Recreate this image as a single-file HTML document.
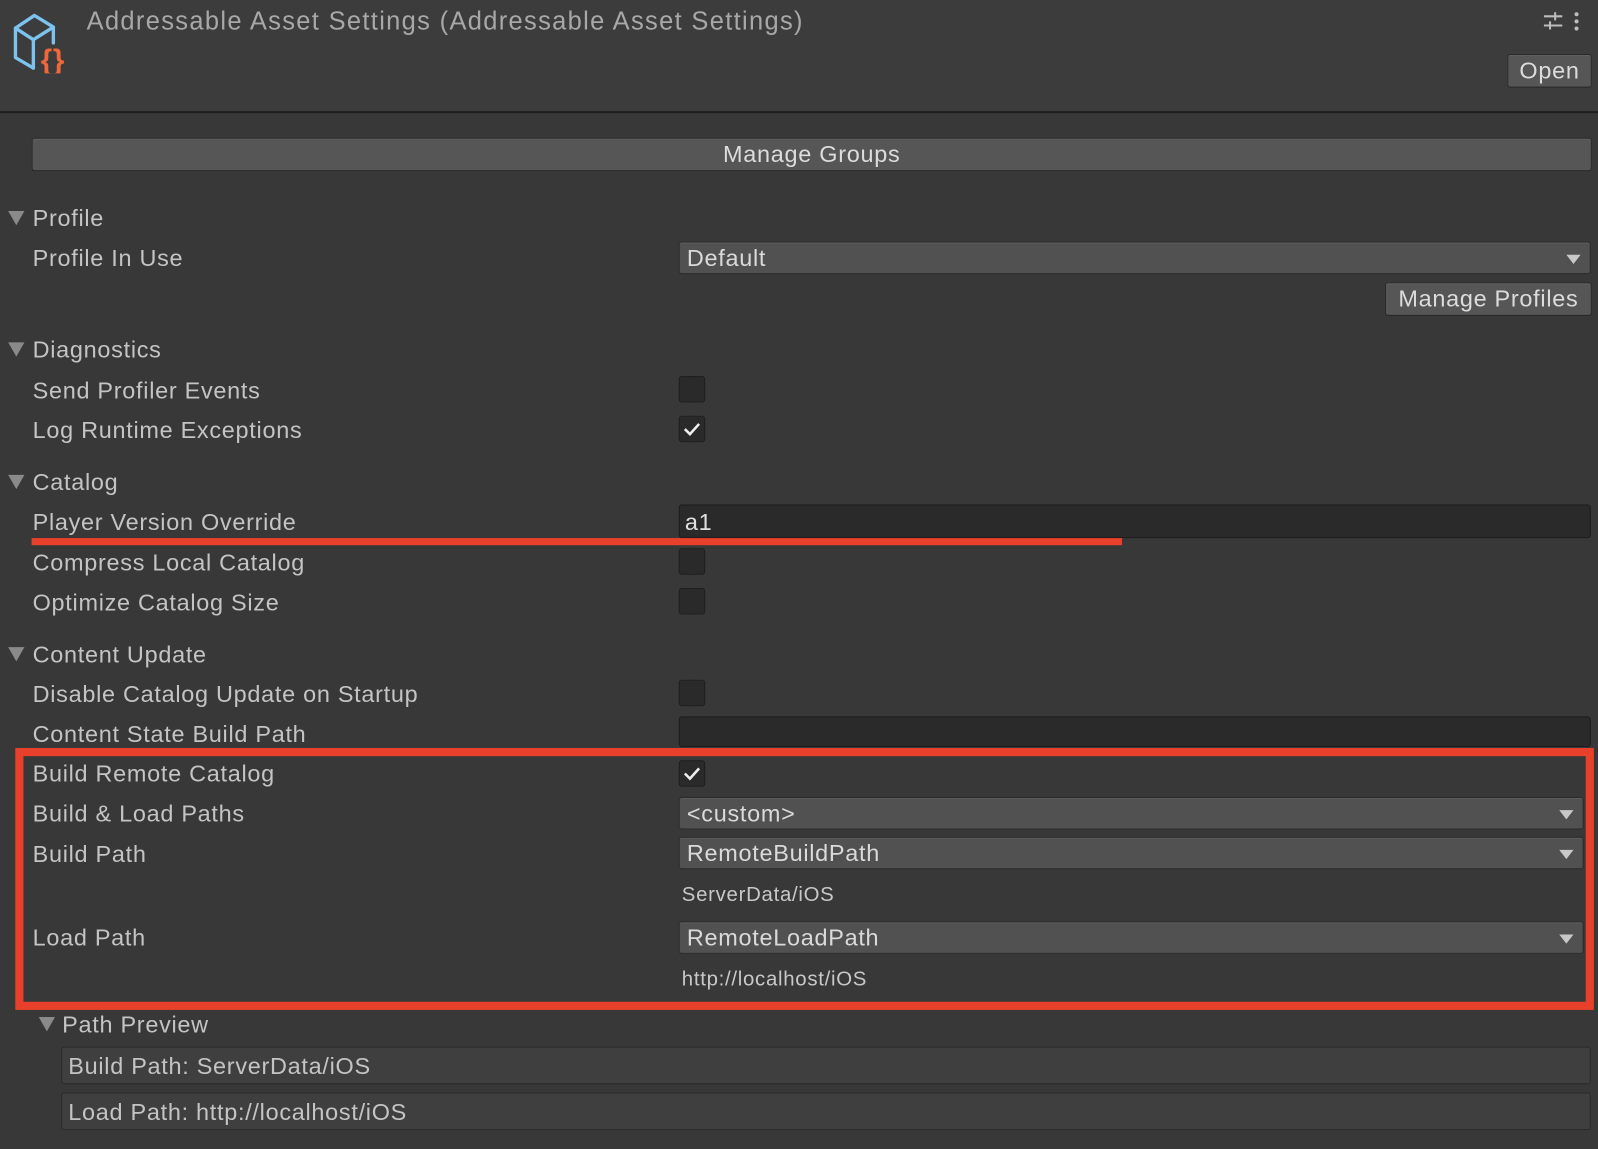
<!DOCTYPE html>
<html><head><meta charset="utf-8"><style>
html,body{margin:0;padding:0;background:#383838;width:1598px;height:1148px;overflow:hidden}
#w{position:absolute;left:0;top:0;width:1568px;height:1127px;transform:scale(1.0191);transform-origin:0 0;font-family:"Liberation Sans",sans-serif;color:#c4c4c4;font-size:23px;letter-spacing:0.7px}
.a{position:absolute;white-space:nowrap}
.l{position:absolute;left:32px;height:28px;line-height:28px;white-space:nowrap}
.tri{position:absolute;width:0;height:0;border-left:8px solid transparent;border-right:8px solid transparent;border-top:14px solid #8a8a8a}
.btn{position:absolute;background:#565656;border:1px solid #2a2a2a;border-bottom-color:#242424;border-radius:3px;color:#dcdcdc;text-align:center;box-sizing:border-box;box-shadow:inset 0 1px 0 #606060}
.dd{position:absolute;left:666px;right:7px;height:32px;background:#515151;border:1px solid #2c2c2c;border-radius:3px;box-sizing:border-box;line-height:30px;padding-left:7px;color:#dadada;box-shadow:inset 0 1px 0 #5c5c5c}
.dd:after{content:"";position:absolute;right:9px;top:12px;border-left:7px solid transparent;border-right:7px solid transparent;border-top:9px solid #c8c8c8}
.cb{position:absolute;left:666px;width:26px;height:26px;background:#2a2a2a;border:1px solid #1f1f1f;border-radius:3px;box-sizing:border-box}
.tf{position:absolute;left:666px;right:7px;height:33px;background:#2a2a2a;border:1px solid #1c1c1c;border-radius:3px;box-sizing:border-box;line-height:32px;padding-left:5px;color:#e0e0e0}
.pv{position:absolute;left:60px;right:7px;height:37px;background:#3f3f3f;border:1px solid #2a2a2a;border-radius:3px;box-sizing:border-box;line-height:36px;padding-left:6px}
</style></head><body><div id="w">
<div class="a" style="left:0;top:0;width:1568px;height:109px;background:#3c3c3c;border-bottom:2px solid #1f1f1f"></div>
<svg class="a" style="left:10px;top:10px" width="62" height="62" viewBox="0 0 60 60">
<path d="M5 17 L23 5 L41 16 L41 31 M5 17 L22 28 L41 16 M5 17 L5 45 L22 55 M22 28 L22 55" fill="none" stroke="#7cc4ef" stroke-width="3.2" stroke-linejoin="round" stroke-linecap="round"/>
<text x="29" y="57" fill="#f0683a" font-family="Liberation Sans" font-weight="bold" font-size="28">{}</text>
</svg>
<div class="a" style="left:85px;top:5px;line-height:32px;font-size:25px;color:#a8a8a8;letter-spacing:1.3px">Addressable Asset Settings (Addressable Asset Settings)</div>
<svg class="a" style="left:1513px;top:9px" width="40" height="24" viewBox="0 0 40 24">
<g stroke="#bdbdbd" stroke-width="2"><path d="M2 7 H20 M2 16 H20"/><path d="M13 3 V11 M8 12 V20"/></g>
<circle cx="34" cy="5" r="2" fill="#bdbdbd"/><circle cx="34" cy="12" r="2" fill="#bdbdbd"/><circle cx="34" cy="19" r="2" fill="#bdbdbd"/>
</svg>
<div class="btn" style="left:1479px;top:53px;width:83px;height:33px;line-height:31px;font-size:23px">Open</div>
<div class="btn" style="left:31px;top:135px;width:1531px;height:33px;line-height:31px">Manage Groups</div>

<div class="tri" style="left:8px;top:207px"></div><div class="l" style="top:200px">Profile</div>
<div class="l" style="top:239px">Profile In Use</div>
<div class="dd" style="top:237px">Default</div>
<div class="btn" style="left:1359px;top:277px;width:203px;height:33px;line-height:31px">Manage Profiles</div>

<div class="tri" style="left:8px;top:336px"></div><div class="l" style="top:329px">Diagnostics</div>
<div class="l" style="top:369px">Send Profiler Events</div><div class="cb" style="top:369px"></div>
<div class="l" style="top:408px">Log Runtime Exceptions</div><div class="cb" style="top:408px"><svg width="24" height="24"><path d="M5 12 L10 17 L19 7" fill="none" stroke="#eee" stroke-width="2.5"/></svg></div>

<div class="tri" style="left:8px;top:466px"></div><div class="l" style="top:459px">Catalog</div>
<div class="l" style="top:498px">Player Version Override</div>
<div class="tf" style="top:495px">a1</div>
<div class="a" style="left:31px;top:528px;width:1070px;height:7px;background:#e8402a"></div>
<div class="l" style="top:538px">Compress Local Catalog</div><div class="cb" style="top:538px"></div>
<div class="l" style="top:577px">Optimize Catalog Size</div><div class="cb" style="top:577px"></div>

<div class="tri" style="left:8px;top:635px"></div><div class="l" style="top:628px">Content Update</div>
<div class="l" style="top:667px">Disable Catalog Update on Startup</div><div class="cb" style="top:667px"></div>
<div class="l" style="top:706px">Content State Build Path</div>
<div class="tf" style="top:703px;height:30px"></div>

<div class="a" style="left:15px;top:734px;width:1549px;height:257px;border:8px solid #e8402a;box-sizing:border-box"></div>
<div class="l" style="top:745px">Build Remote Catalog</div><div class="cb" style="top:746px"><svg width="24" height="24"><path d="M5 12 L10 17 L19 7" fill="none" stroke="#eee" stroke-width="2.5"/></svg></div>
<div class="l" style="top:784px">Build &amp; Load Paths</div><div class="dd" style="top:782px;right:14px">&lt;custom&gt;</div>
<div class="l" style="top:824px">Build Path</div><div class="dd" style="top:821px;right:14px">RemoteBuildPath</div>
<div class="a" style="left:669px;top:866px;font-size:20px;line-height:24px;color:#c8c8c8">ServerData/iOS</div>
<div class="l" style="top:906px">Load Path</div><div class="dd" style="top:904px;right:14px">RemoteLoadPath</div>
<div class="a" style="left:669px;top:949px;font-size:20px;line-height:24px;color:#c8c8c8">http://localhost/iOS</div>

<div class="tri" style="left:38px;top:998px"></div><div class="l" style="left:61px;top:991px">Path Preview</div>
<div class="pv" style="top:1027px">Build Path: ServerData/iOS</div>
<div class="pv" style="top:1072px">Load Path: http://localhost/iOS</div>
</div></body></html>
